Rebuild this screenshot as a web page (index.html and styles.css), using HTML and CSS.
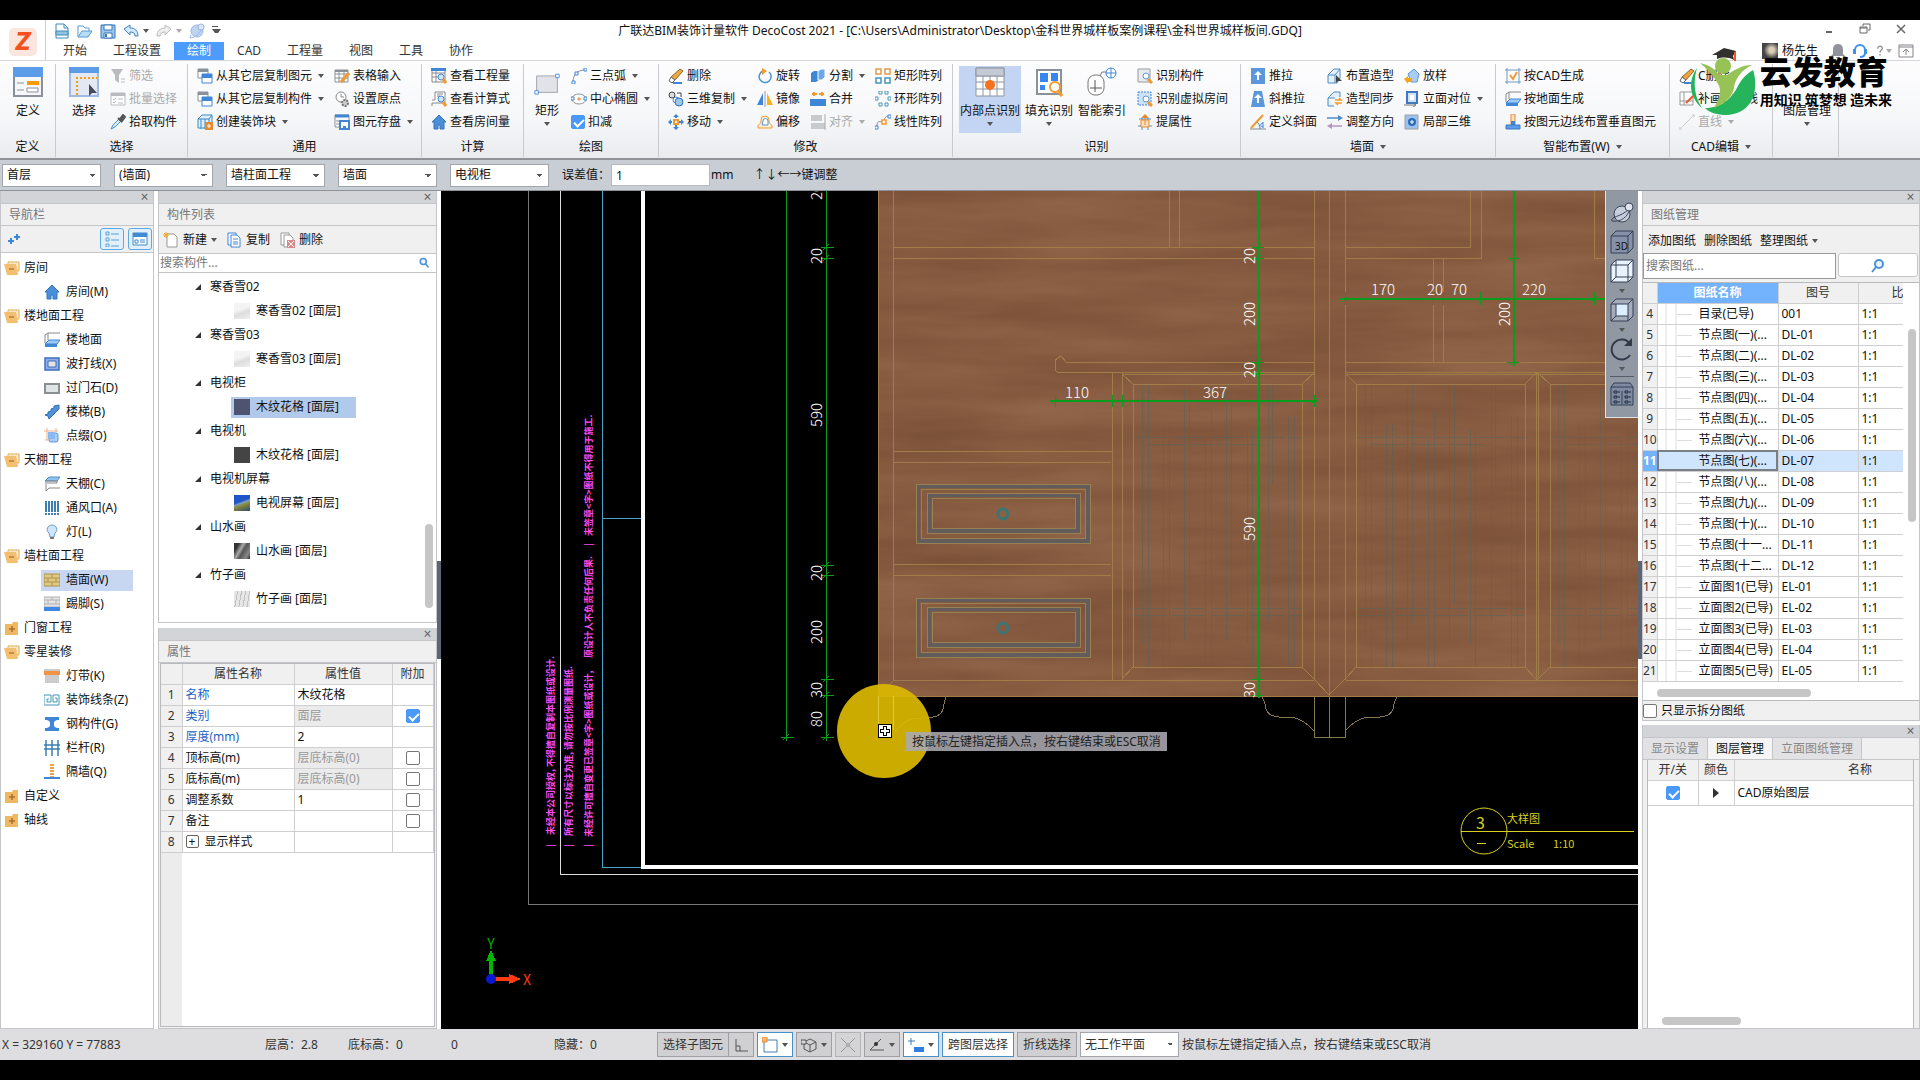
FILE: index.html
```html
<!DOCTYPE html>
<html lang="zh-CN">
<head>
  <meta charset="UTF-8">
  <meta name="viewport" content="width=device-width, initial-scale=1.0">
  <title>广联达BIM装饰计量软件 DecoCost 2021</title>
  <link rel="stylesheet" href="styles.css">
</head>
<body>
  <!-- icon sprite -->
  <svg class="sprite" aria-hidden="true">
    <symbol id="i-new" viewBox="0 0 16 16"><path d="M2 1h8l4 4v10H2z" fill="#fff" stroke="#3f8ab8"/><path d="M10 1v4h4" fill="none" stroke="#3f8ab8"/><path d="M2 8h12v4H2z" fill="#8fc3e6" stroke="#3f8ab8"/></symbol>
    <symbol id="i-open" viewBox="0 0 16 16"><path d="M1 14V3h5l2 2h4v3" fill="#fff" stroke="#5a9bd0"/><path d="M1 14l4-6h10l-4 6z" fill="#b9dcf5" stroke="#5a9bd0"/></symbol>
    <symbol id="i-save" viewBox="0 0 16 16"><path d="M1 2h14v13H1z" fill="#9cc7ec" stroke="#3479b8"/><path d="M4 2h8v5H4zM4 10h8v5H4z" fill="#fff" stroke="#3479b8"/><path d="M6 11v3" stroke="#3479b8" stroke-width="2"/></symbol>
    <symbol id="i-undo" viewBox="0 0 16 16"><path d="M1 6l6-4v3c5 0 8 3 8 8h-3c0-3-2-4-5-4v3z" fill="#d5eafa" stroke="#3a83bf"/></symbol>
    <symbol id="i-redo" viewBox="0 0 16 16"><path d="M15 6L9 2v3C4 5 1 8 1 13h3c0-3 2-4 5-4v3z" fill="#eee" stroke="#bbb"/></symbol>
    <symbol id="i-planet" viewBox="0 0 16 16"><circle cx="8" cy="8" r="6" fill="#bfd3f3" stroke="#9ab6e4"/><circle cx="12" cy="4" r="3" fill="#dce8fa" stroke="#9ab6e4"/><path d="M2 12l-1 3c4 0 9-4 11-8" fill="none" stroke="#9ab6e4"/></symbol>
    <symbol id="i-define" viewBox="0 0 30 30"><path d="M1 1h28v28H1z" fill="#f5f7fb" stroke="#8b919b" stroke-width="2"/><path d="M0 0h30v10H0z" fill="#5b9be8"/><path d="M14 14h12v4H14z" fill="#f90"/><path d="M4 16h7M4 23h7" stroke="#8b919b"/><path d="M14 21h11v4H14z" fill="#fff" stroke="#8b919b"/></symbol>
    <symbol id="i-select" viewBox="0 0 30 30"><path d="M1 1h28v28H1z" fill="#e3e8f3" stroke="#9dbbe4" stroke-width="2"/><path d="M0 0h30v6H0z" fill="#5b9be8"/><path d="M8 28V11h20" fill="none" stroke="#f90" stroke-width="2" stroke-dasharray="2 2"/><path d="M20 17v12l3-3h5z" fill="#454a5c"/></symbol>
    <symbol id="i-filter" viewBox="0 0 16 16"><path d="M1 1h12L9 7v8l-4-3V7z" fill="#b9bbbe"/><path d="M11 11h4M11 14h4" stroke="#b9bbbe"/></symbol>
    <symbol id="i-batch" viewBox="0 0 16 16"><path d="M1 2h14v12H1z" fill="#fff" stroke="#b9bbbe"/><path d="M1 2h14v3H1z" fill="#b9bbbe"/><path d="M3 8l1 1 2-2M3 11l1 1 2-2M8 8h5M8 12h5" fill="none" stroke="#b9bbbe"/></symbol>
    <symbol id="i-pick" viewBox="0 0 16 16"><path d="M1 15l2-4 6-6 2 2-6 6z" fill="#d9ecfa" stroke="#4d8ec4"/><path d="M8 4l4 4M10 5l3-4 2 2-3 4z" fill="#555" stroke="#555" stroke-width="2"/></symbol>
    <symbol id="i-copylayer" viewBox="0 0 16 16"><path d="M1 1h10v9H1z" fill="#fff" stroke="#8b919b"/><path d="M1 1h10v3H1z" fill="#8b919b"/><path d="M5 6h10v9H5z" fill="#fff" stroke="#3f86d6"/><path d="M5 6h10v4H5z" fill="#3f86d6"/></symbol>
    <symbol id="i-block" viewBox="0 0 16 16"><path d="M1 5l4-4h10v10l-3 3H1z" fill="#e0effb" stroke="#3b8ac0"/><path d="M1 5h11v9M4 5v10M8 5v10M12 5l3-4" fill="none" stroke="#3b8ac0"/><path d="M8 8h8v8H8z" fill="#e8892e"/><path d="M12 10v4M10 12h4" stroke="#fff"/></symbol>
    <symbol id="i-table" viewBox="0 0 16 16"><path d="M1 2h13v12H1zM1 6h13M1 10h13M5 2v12M10 2v12" fill="#fff" stroke="#8b919b"/><path d="M1 2h13v2H1z" fill="#8b919b"/><path d="M7 14l8-9" stroke="#f29a2e" stroke-width="3"/></symbol>
    <symbol id="i-origin" viewBox="0 0 16 16"><circle cx="7" cy="6" r="5" fill="#fff" stroke="#888"/><path d="M7 3v3h3" fill="none" stroke="#888"/><circle cx="11" cy="12" r="3" fill="#ccc" stroke="#777" stroke-dasharray="2 1" stroke-width="2"/></symbol>
    <symbol id="i-disk" viewBox="0 0 16 16"><path d="M1 1h14v5M1 1v12h4" fill="#fff" stroke="#8b919b"/><path d="M1 2h14" stroke="#3f86d6" stroke-width="3"/><path d="M6 7h9v8H6z" fill="#fff" stroke="#3f86d6" stroke-width="2"/><path d="M9 12h3v3H9z" fill="#3f86d6"/><path d="M2 7h3M2 10h3" stroke="#8b919b"/></symbol>
    <symbol id="i-lookup" viewBox="0 0 16 16"><path d="M1 1h13v13H1zM1 5h13M1 9h6M5 1v13" fill="#fff" stroke="#888"/><path d="M0 0h15v3H0z" fill="#3f86d6"/><circle cx="10" cy="9" r="3" fill="#cfe6fa" stroke="#3f86d6"/><path d="M12 11l3 4" stroke="#f29a2e" stroke-width="3"/></symbol>
    <symbol id="i-formula" viewBox="0 0 16 16"><path d="M4 1h10v11H1v3M1 9h3V1" fill="#fff" stroke="#888"/><path d="M6 3h6M6 5h3" stroke="#888"/><circle cx="10" cy="8" r="3" fill="#cfe6fa" stroke="#3f86d6"/><path d="M12 11l3 4" stroke="#f29a2e" stroke-width="3"/></symbol>
    <symbol id="i-home" viewBox="0 0 16 16"><path d="M8 1l7 7h-2v7h-4v-4H7v4H3V8H1z" fill="#4a90d9" stroke="#3475bd"/></symbol>
    <symbol id="i-rect" viewBox="0 0 30 30"><path d="M3 8h24v19H3z" fill="#e2e3e8" stroke="#9a9da5"/><path d="M1 25h4v4H1zM25 6h4v4h-4z" fill="#fff" stroke="#3f86d6"/></symbol>
    <symbol id="i-arc" viewBox="0 0 16 16"><path d="M2 14C2 7 6 2 14 2" fill="none" stroke="#8b919b"/><path d="M1 13h3v3H1zM4 4h3v3H4zM13 0h3v3h-3z" fill="#fff" stroke="#3f86d6"/></symbol>
    <symbol id="i-ellipse" viewBox="0 0 16 16"><ellipse cx="8" cy="8" rx="7" ry="5" fill="#fff" stroke="#8b919b"/><path d="M8 6v4M6 8h4" stroke="#e8892e"/><path d="M0 6h3v3H0zM13 6h3v3h-3z" fill="#fff" stroke="#3f86d6"/></symbol>
    <symbol id="i-erase" viewBox="0 0 16 16"><path d="M12 1l3 2-8 9-4-3z" fill="#f0a63a" stroke="#8a6a3a"/><path d="M3 9l4 3-3 3-3-2z" fill="#fff" stroke="#666"/><path d="M5 15h9" stroke="#3f86d6" stroke-width="2"/></symbol>
    <symbol id="i-copy3d" viewBox="0 0 16 16"><circle cx="4" cy="4" r="3" fill="#ddd" stroke="#444"/><circle cx="8" cy="9" r="3" fill="#fff" stroke="#3f86d6"/><circle cx="11" cy="11" r="4" fill="#9cc7ec" stroke="#2d72ba"/><path d="M9 2h4v4" fill="none" stroke="#444"/></symbol>
    <symbol id="i-move" viewBox="0 0 16 16"><path d="M8 0l3 3H5zM8 16l3-3H5zM0 8l3-3v6zM16 8l-3-3v6z" fill="#3f86d6"/><path d="M8 2v12M2 8h12" stroke="#3f86d6" stroke-width="2" stroke-dasharray="2 1"/><path d="M6 6h4v4H6z" fill="#fff" stroke="#f29a2e" stroke-width="2"/></symbol>
    <symbol id="i-rotate" viewBox="0 0 16 16"><path d="M6 3a6 6 0 1 0 6 1" fill="none" stroke="#4f93d6" stroke-width="1.5"/><path d="M5 0l5 3-5 4z" fill="#f29a2e"/></symbol>
    <symbol id="i-mirror" viewBox="0 0 16 16"><path d="M6 2v12H0z" fill="#3f86d6"/><path d="M10 2v12h6z" fill="#f6b21b"/><path d="M8 0v16" stroke="#999"/></symbol>
    <symbol id="i-offset" viewBox="0 0 16 16"><path d="M1 14h14v-2c0-2-3-2-3-4V6a4 4 0 0 0-8 0v2c0 2-3 2-3 4z" fill="#fff1d6" stroke="#f29a2e"/><path d="M5 11h6V7a2 2 0 0 0-5 0z" fill="#fff" stroke="#4f93d6"/></symbol>
    <symbol id="i-split" viewBox="0 0 16 16"><path d="M1 5l3-2h5v9l-3 2H1z" fill="#3f86d6"/><path d="M8 3l3-2h4v8l-3 3H8z" fill="#6ba7ea" stroke="#fff"/></symbol>
    <symbol id="i-merge" viewBox="0 0 16 16"><path d="M0 8h16v7H0z" fill="#3f86d6"/><path d="M2 3h5M9 3h5M4 1v4M12 1v4" stroke="#f29a2e" stroke-width="2"/></symbol>
    <symbol id="i-align" viewBox="0 0 16 16"><path d="M1 1h11v6H1zM1 9h14v6H1z" fill="#c9cacc"/><path d="M15 0v16" stroke="#aaa"/></symbol>
    <symbol id="i-gridarr" viewBox="0 0 16 16"><path d="M1 1h5v5H1zM10 1h5v5h-5z" fill="#fff" stroke="#e09a4e" stroke-width="1.5"/><path d="M1 10h5v5H1zM10 10h5v5h-5z" fill="#fff" stroke="#4596b8" stroke-width="1.5"/></symbol>
    <symbol id="i-ringarr" viewBox="0 0 16 16"><path d="M4 0h3v3H4zM10 0h3v3h-3zM0 6h3v3H0zM13 6h3v3h-3zM4 12h3v3H4zM10 12h3v3h-3z" fill="#fff" stroke="#4596b8"/></symbol>
    <symbol id="i-linearr" viewBox="0 0 16 16"><path d="M2 12c0-7 4-3 6-5s2-5 6-5" fill="none" stroke="#888"/><path d="M0 12h3v3H0zM13 1h3v3h-3z" fill="#fff" stroke="#3f86d6"/><path d="M7 6h4v4H7z" fill="#fff" stroke="#f29a2e" stroke-width="1.5"/></symbol>
    <symbol id="i-point" viewBox="0 0 30 30"><path d="M1 1h28v28H1zM1 9h28M1 15h28M1 22h28M8 9v20M15 9v20M22 9v20" fill="#fff" stroke="#8d94a0"/><path d="M1 1h28v8H1z" fill="#c3cad6" stroke="#8d94a0"/><circle cx="15" cy="18" r="5" fill="#f4731c"/></symbol>
    <symbol id="i-fill" viewBox="0 0 30 30"><path d="M3 3h24v24H3z" fill="#fff" stroke="#8b919b" stroke-width="2"/><path d="M6 6h8v9H6zM17 6h7v8h-7zM6 18h5v5H6z" fill="#3a86ef"/><circle cx="21" cy="20" r="5" fill="#fff" stroke="#f29a2e" stroke-width="2"/><path d="M24 24l4 5" stroke="#f29a2e" stroke-width="3"/></symbol>
    <symbol id="i-index" viewBox="0 0 30 30"><rect x="1" y="8" width="16" height="20" rx="7" fill="#fff" stroke="#777"/><path d="M3 21h12M8 13v12" stroke="#555"/><circle cx="24" cy="6" r="5" fill="#fff" stroke="#3f86d6"/><path d="M19 6h10M24 1v10" stroke="#3f86d6"/><path d="M13 9l2-4h4" fill="none" stroke="#777"/></symbol>
    <symbol id="i-recog" viewBox="0 0 16 16"><path d="M1 1h12v13H1z" fill="#e7eaf0" stroke="#999"/><circle cx="9" cy="8" r="3" fill="#fff" stroke="#6795cf"/><path d="M11 11l4 4" stroke="#f29a2e" stroke-width="3"/></symbol>
    <symbol id="i-recogroom" viewBox="0 0 16 16"><path d="M1 1h13v13H1z" fill="#cfe3f8" stroke="#3f86d6" stroke-dasharray="2 1"/><circle cx="9" cy="8" r="3" fill="#fff" stroke="#6795cf"/><path d="M11 11l4 4" stroke="#f29a2e" stroke-width="3"/></symbol>
    <symbol id="i-attr" viewBox="0 0 16 16"><path d="M2 5h12M1 12h14M5 4v12M11 4v12" stroke="#4f93d6"/><path d="M4 6h8v7H4z" fill="#fbe0c0" stroke="#e8892e"/><path d="M8 0l4 4H4z" fill="#e8892e"/><path d="M8 3v8" stroke="#e8892e"/></symbol>
    <symbol id="i-push" viewBox="0 0 16 16"><path d="M1 0h14v16H1z" fill="#5b97dd"/><path d="M8 3l4 4H9v5H7V7H4z" fill="#fff"/></symbol>
    <symbol id="i-slope" viewBox="0 0 16 16"><path d="M4 0h8l3 16H1z" fill="#5b97dd"/><path d="M8 3l4 4H9v5H7V7H4z" fill="#fff"/></symbol>
    <symbol id="i-angle" viewBox="0 0 16 16"><path d="M0 15h16" stroke="#888"/><path d="M1 14L13 1" stroke="#f29a2e" stroke-width="2"/><path d="M7 8c2 1 3 4 3 7M13 9c-3 0-3 4 0 4M13 8v6" fill="none" stroke="#3f86d6"/></symbol>
    <symbol id="i-shape" viewBox="0 0 16 16"><path d="M1 7l6-6h6v9l-3 5H1z" fill="#e3f0fb" stroke="#4f8cc4"/><path d="M1 7h7v8M8 7l5-6" fill="none" stroke="#4f8cc4"/><path d="M9 7v8l2-2h4z" fill="#444"/></symbol>
    <symbol id="i-sync" viewBox="0 0 16 16"><path d="M1 7l6-6h6v5M1 7v8h6M1 7h7" fill="#e3f0fb" stroke="#4f8cc4"/><path d="M8 9h6l-2-2M15 12H9l2 2" fill="none" stroke="#f29a2e" stroke-width="1.5"/></symbol>
    <symbol id="i-direction" viewBox="0 0 16 16"><path d="M0 4h12" stroke="#4f8cc4" stroke-width="1.5"/><path d="M11 1l5 3-5 3z" fill="#4f8cc4"/><path d="M4 12h11" stroke="#b396c4" stroke-width="1.5"/><path d="M5 9l-5 3 5 3z" fill="#b396c4"/></symbol>
    <symbol id="i-loft" viewBox="0 0 16 16"><path d="M4 6l6-5 5 5-2 8H7z" fill="#a9cdf2" stroke="#5b97dd"/><path d="M0 11l4-3v2h4v4H4v2z" fill="#f6a51b"/></symbol>
    <symbol id="i-align3" viewBox="0 0 16 16"><path d="M3 1h10v11H3z" fill="#cfe3f8" stroke="#3f78c0" stroke-width="2"/><path d="M6 4h4v5H6z" fill="#fff"/><path d="M0 14h11M9 12l3 2-3 2" fill="none" stroke="#777"/></symbol>
    <symbol id="i-local3d" viewBox="0 0 16 16"><path d="M1 1h13v14H1z" fill="#9fc2ec" stroke="#9aa0a8"/><circle cx="8" cy="8" r="4" fill="#2d6cb8"/><path d="M8 6v4M6 8h4" stroke="#fff"/></symbol>
    <symbol id="i-bycad" viewBox="0 0 16 16"><path d="M2 0v16M14 0v16M0 2h16M0 14h16" stroke="#6f9bc4"/><path d="M5 7l3 4 4-7" fill="none" stroke="#f29a2e" stroke-width="2"/></symbol>
    <symbol id="i-floor" viewBox="0 0 16 16"><path d="M4 8V1h12M4 1L1 3v8" fill="none" stroke="#888"/><path d="M1 12l4-4h11l-3 4z" fill="#9ccaf2" stroke="#3f86d6"/><path d="M1 12h12v3H1z" fill="#3f86d6"/></symbol>
    <symbol id="i-edge" viewBox="0 0 16 16"><path d="M6 0h4v11H6z" fill="#fbe0c0" stroke="#e8892e"/><path d="M6 7h4v4H6z" fill="#3f86d6"/><path d="M1 11h14v4H1z" fill="#5b9be8" stroke="#3f78c0"/></symbol>
    <symbol id="i-patch" viewBox="0 0 16 16"><path d="M1 1h13v13H1zM5 1v13M1 10h13" fill="#fff" stroke="#999"/><path d="M7 12l7-7" stroke="#e8592e" stroke-width="2"/></symbol>
    <symbol id="i-line" viewBox="0 0 16 16"><path d="M2 14L14 2" stroke="#ccc"/><path d="M0 13h3v3H0zM13 0h3v3h-3z" fill="#ddd"/></symbol>
    <symbol id="i-folder" viewBox="0 0 16 16"><path d="M4 2h11v9H4z" fill="#fbe9c8" stroke="#e2ab55"/><path d="M0 4h12l2 11H3z" fill="#f3bf71"/><path d="M5 9h5" stroke="#b9783a" stroke-width="1.5"/></symbol>
    <symbol id="i-folder-plus" viewBox="0 0 16 16"><path d="M1 4h7l1-2h5v13H1z" fill="#f0b863"/><path d="M5 9h6M8 6v6" stroke="#a96f2a" stroke-width="1.5"/></symbol>
    <symbol id="i-ceiling" viewBox="0 0 16 16"><path d="M1 5l4-4h11l-3 4z" fill="#8ec2ef" stroke="#4f8cc4"/><path d="M1 5h12v2H1M2 8v7l3-3h11" fill="none" stroke="#888"/></symbol>
    <symbol id="i-wave" viewBox="0 0 16 16"><path d="M1 2h14v12H1z" fill="#8fb0e4" stroke="#3f6fc0" stroke-width="1.5"/><path d="M4 5h8v6H4z" fill="#e4e4e4" stroke="#3f6fc0"/></symbol>
    <symbol id="i-stone" viewBox="0 0 16 16"><path d="M1 4h14v9H1z" fill="#e0e4e6" stroke="#8a9092" stroke-width="2"/></symbol>
    <symbol id="i-stairs" viewBox="0 0 16 16"><path d="M1 11l3-1V8l3-1V5l3-1V2l5-1v4L5 15l-1-3z" fill="#4f93d6" stroke="#2f70b5"/></symbol>
    <symbol id="i-dot" viewBox="0 0 16 16"><rect x="5" y="5" width="9" height="9" rx="2" fill="#a9cdf5" stroke="#5b97dd"/><path d="M3 0v12M0 3h14M12 0v4M1 12h4" stroke="#f0b08a"/><path d="M4 4h7v7H4z" fill="#8ab8f0"/></symbol>
    <symbol id="i-vent" viewBox="0 0 16 16"><path d="M2 1v11M5 1v11M8 1v11M11 1v11M14 1v11M2 13v2M5 13v2M8 13v2M11 13v2M14 13v2" stroke="#3e7fb0" stroke-width="2"/></symbol>
    <symbol id="i-bulb" viewBox="0 0 16 16"><path d="M5 9C1 6 4 1 8 1s7 5 3 8l-1 4H6z" fill="#cfe5fa" stroke="#6b9bc8"/><path d="M6 14h4" stroke="#777" stroke-width="2"/></symbol>
    <symbol id="i-wall" viewBox="0 0 16 16"><path d="M0 2h16v12H0zM0 6h16M0 10h16M8 2v4M4 6v4M12 6v4M8 10v4" fill="#dcc98a" stroke="#b3923f"/></symbol>
    <symbol id="i-skirting" viewBox="0 0 16 16"><path d="M0 1h16v10H0zM0 4h16M0 8h16M8 1v3M4 4v4M12 4v4" fill="#e5e5e5" stroke="#b0b0b0"/><path d="M0 11h16v4H0z" fill="#3f86e6"/></symbol>
    <symbol id="i-strip" viewBox="0 0 16 16"><path d="M0 1h16v3H0zM1 7h14v8H1z" fill="#ccc"/><path d="M0 3h16v4H0z" fill="#f29444"/></symbol>
    <symbol id="i-meander" viewBox="0 0 16 16"><path d="M0 3h7v7H3V7h2M0 13h15V3H9v7h4V6h-2M0 3v9" fill="none" stroke="#4596b8"/></symbol>
    <symbol id="i-steel" viewBox="0 0 16 16"><path d="M1 1h14v3h-2c-3 1-3 2-3 4s0 3 3 4h2v3H1v-3h2c3-1 3-2 3-4s0-3-3-4H1z" fill="#3f86d6"/></symbol>
    <symbol id="i-rail" viewBox="0 0 16 16"><path d="M0 5h16M0 9h16M2 0v16M8 0v16M14 0v16" stroke="#3e7fb0" stroke-width="1.5"/></symbol>
    <symbol id="i-partition" viewBox="0 0 16 16"><path d="M8 0v13" stroke="#f0a04e" stroke-width="4" stroke-dasharray="2 1"/><path d="M0 14h16" stroke="#3f86d6" stroke-width="2"/></symbol>
    <symbol id="i-plus2" viewBox="0 0 16 16"><path d="M2 10h6M5 7v6M8 6h6M11 3v6" stroke="#3f86d6" stroke-width="2"/></symbol>
    <symbol id="i-list" viewBox="0 0 16 16"><path d="M2 1h3v3H2zM2 7h3v3H2zM2 13h3v3H2zM7 3h8M7 9h8M7 15h8" fill="none" stroke="#5a9ed6"/></symbol>
    <symbol id="i-window" viewBox="0 0 16 16"><path d="M1 2h14v12H1z" fill="#fff" stroke="#3f8ad0"/><path d="M1 2h14v4H1z" fill="#3f8ad0"/><path d="M8 9h5M8 11h5M3 9h3v3H3z" stroke="#3f8ad0" fill="none"/></symbol>
    <symbol id="i-add" viewBox="0 0 16 16"><path d="M4 2h7l3 3v10H4z" fill="#fff" stroke="#999"/><path d="M3 0v6M0 3h6M1 1l4 4M5 1L1 5" stroke="#f5a623"/></symbol>
    <symbol id="i-copy" viewBox="0 0 16 16"><path d="M2 1h8v12H2z" fill="#fff" stroke="#3f86d6"/><path d="M5 3h6l3 3v9H5zM7 7h5M7 10h5M7 12h5" fill="#fff" stroke="#3f86d6"/></symbol>
    <symbol id="i-delete" viewBox="0 0 16 16"><path d="M2 1h8v12H2z" fill="#fff" stroke="#999"/><path d="M5 3h6l3 3v9H5z" fill="#fff" stroke="#999"/><path d="M8 8h8v8H8z" fill="#d98888"/><path d="M9 9l6 6M15 9l-6 6" stroke="#fff"/></symbol>
    <symbol id="i-search" viewBox="0 0 16 16"><circle cx="7" cy="6" r="4" fill="#eaf4fd" stroke="#4a90d9" stroke-width="2"/><path d="M10 9l4 5" stroke="#4a90d9" stroke-width="2"/></symbol>
    <symbol id="i-bell" viewBox="0 0 16 16"><path d="M8 1c4 0 5 3 5 6v4l2 2H1l2-2V7c0-3 1-6 5-6zM6 14h4v1H6z" fill="#909399"/></symbol>
    <symbol id="i-headset" viewBox="0 0 16 16"><path d="M3 9V7a5 5 0 0 1 10 0v3c0 3-2 4-5 4" fill="none" stroke="#3d92ee" stroke-width="2"/><path d="M1 6h3v5H1zM12 6h3v5h-3z" fill="#3d92ee"/></symbol>
    <symbol id="i-pin" viewBox="0 0 16 16"><path d="M1 2h14v12H1zM1 4h14M8 12V7M5 9l3-3 3 3" fill="none" stroke="#808388"/></symbol>
    <symbol id="i-help" viewBox="0 0 16 16"><path d="M5 5c0-5 7-4 6 0-1 2-3 2-3 5M8 12v2" fill="none" stroke="#999" stroke-width="2"/></symbol>
    <symbol id="i-min" viewBox="0 0 16 16"><path d="M5 11h6" stroke="#666" stroke-width="2"/></symbol>
    <symbol id="i-restore" viewBox="0 0 16 16"><path d="M6 5V3h7v6h-2M3 6h7v6H3zM3 7h7" fill="none" stroke="#666"/></symbol>
    <symbol id="i-close" viewBox="0 0 16 16"><path d="M4 4l8 8M12 4l-8 8" stroke="#666" stroke-width="1.5"/></symbol>
    <symbol id="i-orbit" viewBox="0 0 24 24"><circle cx="12" cy="13" r="8" fill="#c6cede" stroke="#3c4658"/><path d="M2 20c-2-5 8-3 17-12M2 20c5 1 14-1 17-10" fill="none" stroke="#3c4658"/><circle cx="19" cy="6" r="4" fill="#dfe4ee" stroke="#3c4658"/></symbol>
    <symbol id="i-cube3d" viewBox="0 0 24 24"><path d="M1 6l5-5h17v17l-5 5H1zM1 6h17v17M18 6l5-5" fill="#8591a8" stroke="#353f55"/></symbol>
    <symbol id="i-cube-a" viewBox="0 0 24 24"><path d="M1 6l5-5h17v17l-5 5H1z" fill="#e8f3ff" stroke="#353f55"/><path d="M1 6h17v17M18 6l5-5M6 1v17h17M1 23l5-5" fill="none" stroke="#353f55"/></symbol>
    <symbol id="i-cube-b" viewBox="0 0 24 24"><path d="M1 6l5-5h17v17l-5 5H1z" fill="#a5adbb" stroke="#353f55"/><path d="M6 6h12v12H6z" fill="#dceeff"/><path d="M1 6h17v17M18 6l5-5M6 6v12h12M1 23l5-5" fill="none" stroke="#353f55"/></symbol>
    <symbol id="i-turn" viewBox="0 0 24 24"><path d="M20 18A10 10 0 1 1 20 7" fill="none" stroke="#333b4a" stroke-width="2"/><path d="M22 1v8h-8z" fill="#333b4a"/></symbol>
    <symbol id="i-checks" viewBox="0 0 24 24"><path d="M1 5l3-4h16l3 4v18H1zM1 5h22M12 9v13" fill="#7e8ba3" stroke="#353f55"/><path d="M4 9h3v2H4zM4 14h3v2H4zM4 19h3v2H4zM15 9h3v2h-3zM15 14h3v2h-3zM15 19h3v2h-3zM8 10h2M8 15h2M8 20h2M19 10h2M19 15h2M19 20h2" fill="none" stroke="#222b3b"/></symbol>
    <symbol id="i-ortho" viewBox="0 0 16 16"><path d="M3 2v12h12M3 9h4v5" fill="none" stroke="#555"/></symbol>
    <symbol id="i-snap" viewBox="0 0 16 16"><path d="M2 3h13v12H2z" fill="#fff" stroke="#3f7fb5"/><path d="M0 0h5v5H0z" fill="#f9b877" stroke="#e8892e"/></symbol>
    <symbol id="i-box" viewBox="0 0 16 16"><path d="M3 5l6-3 6 3v7l-6 3-6-3zM9 8v7M3 5l6 3 6-3" fill="none" stroke="#555"/><path d="M0 3h5v4H0z" fill="#d8d8da" stroke="#555"/></symbol>
    <symbol id="i-cross" viewBox="0 0 16 16"><path d="M1 1l14 14M15 1L1 15" stroke="#777"/><path d="M6 6h4v4H6z" fill="#999"/></symbol>
    <symbol id="i-track" viewBox="0 0 16 16"><path d="M1 13h14M1 13L12 2" fill="none" stroke="#555"/><circle cx="7" cy="7" r="2" fill="#333"/></symbol>
    <symbol id="i-dyn" viewBox="0 0 16 16"><path d="M3 1v7M0 4h7" stroke="#3f7fb5"/><path d="M6 10h10v5H6z" fill="#2f7fe0"/></symbol>
  </svg>

  <header class="titlebar">
    <div class="app-logo"><span>Z</span></div>
    <div class="title-main">
      <div class="quick">
        <button aria-label="新建"><svg><use href="#i-new"/></svg></button>
        <button aria-label="打开"><svg><use href="#i-open"/></svg></button>
        <button aria-label="保存"><svg><use href="#i-save"/></svg></button>
        <button aria-label="撤销"><svg><use href="#i-undo"/></svg><i class="caret"></i></button>
        <button aria-label="恢复"><svg><use href="#i-redo"/></svg><i class="caret pale"></i></button>
        <button aria-label="视图"><svg><use href="#i-planet"/></svg></button>
        <button aria-label="自定义快速访问"><i class="caret barred"></i></button>
      </div>
      <nav class="tabs">
        <a href="#">开始</a><a href="#">工程设置</a><a href="#" class="active">绘制</a><a href="#">CAD</a><a href="#">工程量</a><a href="#">视图</a><a href="#">工具</a><a href="#">协作</a>
      </nav>
    </div>
    <h1>广联达BIM装饰计量软件 DecoCost 2021 - [C:\Users\Administrator\Desktop\金科世界城样板案例课程\金科世界城样板间.GDQ]</h1>
    <div class="title-right">
      <div class="win-btns">
        <button aria-label="最小化"><svg><use href="#i-min"/></svg></button>
        <button aria-label="还原"><svg><use href="#i-restore"/></svg></button>
        <button aria-label="关闭"><svg><use href="#i-close"/></svg></button>
      </div>
      <div class="user">
        <span class="avatar"></span><span class="user-name">杨先生</span>
        <svg><use href="#i-bell"/></svg>
        <svg><use href="#i-headset"/></svg>
        <span class="help"><svg><use href="#i-help"/></svg><i class="caret pale"></i></span>
        <svg><use href="#i-pin"/></svg>
      </div>
    </div>
    <div class="watermark">
      <svg class="wm-logo" viewBox="0 0 68 68">
        <path d="M9 20C-1 34 2 50 14 60 6 48 5 34 9 20z" fill="#25b35c"/>
        <path d="M17 60C34 60 44 50 50 38 54 30 59 26 65 22 71 40 66 66 38 67 30 67 22 65 17 60z" fill="#25b35c"/>
        <path d="M12 15C22 17 28 22 31 27H39C46 22 54 17 64 17 54 22 47 30 46 40 44 50 36 56 26 60 32 50 34 42 30 36 26 28 20 22 12 15z" fill="#97c255"/>
        <circle cx="35" cy="18" r="8" fill="#97c255"/>
        <path d="M24 7l12-7 12 3-3 5 1 4c-6-3-11-3-17-1v-4z" fill="#33312f"/>
        <path d="M47 4v9" stroke="#e8592e" stroke-width="2"/>
      </svg>
      <div class="wm-text"><strong>云发教育</strong><em>用知识 筑梦想 造未来</em></div>
    </div>
  </header>

  <section class="ribbon">
    <div class="group g-define">
      <div class="group-body"><button class="big"><svg><use href="#i-define"/></svg>定义</button></div>
      <div class="group-label">定义</div>
    </div>
    <div class="group g-select">
      <div class="group-body">
        <button class="big"><svg><use href="#i-select"/></svg>选择</button>
        <div class="col">
          <button class="cmd" disabled><svg><use href="#i-filter"/></svg>筛选</button>
          <button class="cmd" disabled><svg><use href="#i-batch"/></svg>批量选择</button>
          <button class="cmd"><svg><use href="#i-pick"/></svg>拾取构件</button>
        </div>
      </div>
      <div class="group-label">选择</div>
    </div>
    <div class="group g-common">
      <div class="group-body">
        <div class="col">
          <button class="cmd"><svg><use href="#i-copylayer"/></svg>从其它层复制图元<i class="caret"></i></button>
          <button class="cmd"><svg><use href="#i-copylayer"/></svg>从其它层复制构件<i class="caret"></i></button>
          <button class="cmd"><svg><use href="#i-block"/></svg>创建装饰块<i class="caret"></i></button>
        </div>
        <div class="col">
          <button class="cmd"><svg><use href="#i-table"/></svg>表格输入</button>
          <button class="cmd"><svg><use href="#i-origin"/></svg>设置原点</button>
          <button class="cmd"><svg><use href="#i-disk"/></svg>图元存盘<i class="caret"></i></button>
        </div>
      </div>
      <div class="group-label">通用</div>
    </div>
    <div class="group g-calc">
      <div class="group-body">
        <div class="col">
          <button class="cmd"><svg><use href="#i-lookup"/></svg>查看工程量</button>
          <button class="cmd"><svg><use href="#i-formula"/></svg>查看计算式</button>
          <button class="cmd"><svg><use href="#i-home"/></svg>查看房间量</button>
        </div>
      </div>
      <div class="group-label">计算</div>
    </div>
    <div class="group g-draw">
      <div class="group-body">
        <button class="big"><svg><use href="#i-rect"/></svg>矩形<i class="caret"></i></button>
        <div class="col">
          <button class="cmd"><svg><use href="#i-arc"/></svg>三点弧<i class="caret"></i></button>
          <button class="cmd"><svg><use href="#i-ellipse"/></svg>中心椭圆<i class="caret"></i></button>
          <label class="cmd"><input type="checkbox" checked>扣减</label>
        </div>
      </div>
      <div class="group-label">绘图</div>
    </div>
    <div class="group g-modify">
      <div class="group-body">
        <div class="col">
          <button class="cmd"><svg><use href="#i-erase"/></svg>删除</button>
          <button class="cmd"><svg><use href="#i-copy3d"/></svg>三维复制<i class="caret"></i></button>
          <button class="cmd"><svg><use href="#i-move"/></svg>移动<i class="caret"></i></button>
        </div>
        <div class="col">
          <button class="cmd"><svg><use href="#i-rotate"/></svg>旋转</button>
          <button class="cmd"><svg><use href="#i-mirror"/></svg>镜像</button>
          <button class="cmd"><svg><use href="#i-offset"/></svg>偏移</button>
        </div>
        <div class="col">
          <button class="cmd"><svg><use href="#i-split"/></svg>分割<i class="caret"></i></button>
          <button class="cmd"><svg><use href="#i-merge"/></svg>合并</button>
          <button class="cmd" disabled><svg><use href="#i-align"/></svg>对齐<i class="caret pale"></i></button>
        </div>
        <div class="col">
          <button class="cmd"><svg><use href="#i-gridarr"/></svg>矩形阵列</button>
          <button class="cmd"><svg><use href="#i-ringarr"/></svg>环形阵列</button>
          <button class="cmd"><svg><use href="#i-linearr"/></svg>线性阵列</button>
        </div>
      </div>
      <div class="group-label">修改</div>
    </div>
    <div class="group g-recog">
      <div class="group-body">
        <div class="bigs">
          <button class="big on"><svg><use href="#i-point"/></svg>内部点识别<i class="caret"></i></button>
          <button class="big"><svg><use href="#i-fill"/></svg>填充识别<i class="caret"></i></button>
          <button class="big"><svg><use href="#i-index"/></svg>智能索引</button>
        </div>
        <div class="col">
          <button class="cmd"><svg><use href="#i-recog"/></svg>识别构件</button>
          <button class="cmd"><svg><use href="#i-recogroom"/></svg>识别虚拟房间</button>
          <button class="cmd"><svg><use href="#i-attr"/></svg>提属性</button>
        </div>
      </div>
      <div class="group-label">识别</div>
    </div>
    <div class="group g-wall">
      <div class="group-body">
        <div class="col">
          <button class="cmd"><svg><use href="#i-push"/></svg>推拉</button>
          <button class="cmd"><svg><use href="#i-slope"/></svg>斜推拉</button>
          <button class="cmd"><svg><use href="#i-angle"/></svg>定义斜面</button>
        </div>
        <div class="col">
          <button class="cmd"><svg><use href="#i-shape"/></svg>布置造型</button>
          <button class="cmd"><svg><use href="#i-sync"/></svg>造型同步</button>
          <button class="cmd"><svg><use href="#i-direction"/></svg>调整方向</button>
        </div>
        <div class="col">
          <button class="cmd"><svg><use href="#i-loft"/></svg>放样</button>
          <button class="cmd"><svg><use href="#i-align3"/></svg>立面对位<i class="caret"></i></button>
          <button class="cmd"><svg><use href="#i-local3d"/></svg>局部三维</button>
        </div>
      </div>
      <div class="group-label">墙面<i class="caret"></i></div>
    </div>
    <div class="group g-smart">
      <div class="group-body">
        <div class="col">
          <button class="cmd"><svg><use href="#i-bycad"/></svg>按CAD生成</button>
          <button class="cmd"><svg><use href="#i-floor"/></svg>按地面生成</button>
          <button class="cmd"><svg><use href="#i-edge"/></svg>按图元边线布置垂直图元</button>
        </div>
      </div>
      <div class="group-label">智能布置(W)<i class="caret"></i></div>
    </div>
    <div class="group g-cad">
      <div class="group-body">
        <div class="col">
          <button class="cmd"><svg><use href="#i-erase"/></svg>C删除</button>
          <button class="cmd"><svg><use href="#i-patch"/></svg>补画CAD线</button>
          <button class="cmd" disabled><svg><use href="#i-line"/></svg>直线<i class="caret pale"></i></button>
        </div>
      </div>
      <div class="group-label">CAD编辑<i class="caret"></i></div>
    </div>
    <div class="group g-layer">
      <div class="group-body"><button class="big"><svg></svg>图层管理<i class="caret"></i></button></div>
    </div>
  </section>

  <section class="options">
    <select aria-label="楼层"><option>首层</option></select>
    <select aria-label="类型"><option>(墙面)</option></select>
    <select aria-label="工程"><option>墙柱面工程</option></select>
    <select aria-label="构件类型"><option>墙面</option></select>
    <select aria-label="构件"><option>电视柜</option></select>
    <div class="tolerance"><label for="tol">误差值：</label><input id="tol" type="text" value="1"><span>mm</span></div>
    <span>↑↓←→键调整</span>
  </section>

  <main>
    <aside class="panel nav-panel">
      <div class="strip"><button aria-label="关闭">×</button></div>
      <h2>导航栏</h2>
      <div class="toolbar nav-tools">
        <svg><use href="#i-plus2"/></svg>
        <button class="toggle" aria-label="列表"><svg><use href="#i-list"/></svg></button>
        <button class="toggle" aria-label="窗口"><svg><use href="#i-window"/></svg></button>
      </div>
      <ul class="nav-tree">
        <li class="folder"><svg><use href="#i-folder"/></svg>房间</li>
        <li><a href="#"><svg><use href="#i-home"/></svg>房间(M)</a></li>
        <li class="folder"><svg><use href="#i-folder"/></svg>楼地面工程</li>
        <li><a href="#"><svg><use href="#i-floor"/></svg>楼地面</a></li>
        <li><a href="#"><svg><use href="#i-wave"/></svg>波打线(X)</a></li>
        <li><a href="#"><svg><use href="#i-stone"/></svg>过门石(D)</a></li>
        <li><a href="#"><svg><use href="#i-stairs"/></svg>楼梯(B)</a></li>
        <li><a href="#"><svg><use href="#i-dot"/></svg>点缀(O)</a></li>
        <li class="folder"><svg><use href="#i-folder"/></svg>天棚工程</li>
        <li><a href="#"><svg><use href="#i-ceiling"/></svg>天棚(C)</a></li>
        <li><a href="#"><svg><use href="#i-vent"/></svg>通风口(A)</a></li>
        <li><a href="#"><svg><use href="#i-bulb"/></svg>灯(L)</a></li>
        <li class="folder"><svg><use href="#i-folder"/></svg>墙柱面工程</li>
        <li><a href="#" class="selected"><svg><use href="#i-wall"/></svg>墙面(W)</a></li>
        <li><a href="#"><svg><use href="#i-skirting"/></svg>踢脚(S)</a></li>
        <li class="folder"><svg><use href="#i-folder-plus"/></svg>门窗工程</li>
        <li class="folder"><svg><use href="#i-folder"/></svg>零星装修</li>
        <li><a href="#"><svg><use href="#i-strip"/></svg>灯带(K)</a></li>
        <li><a href="#"><svg><use href="#i-meander"/></svg>装饰线条(Z)</a></li>
        <li><a href="#"><svg><use href="#i-steel"/></svg>钢构件(G)</a></li>
        <li><a href="#"><svg><use href="#i-rail"/></svg>栏杆(R)</a></li>
        <li><a href="#"><svg><use href="#i-partition"/></svg>隔墙(Q)</a></li>
        <li class="folder"><svg><use href="#i-folder-plus"/></svg>自定义</li>
        <li class="folder"><svg><use href="#i-folder-plus"/></svg>轴线</li>
      </ul>
    </aside>

    <div class="splitter"></div>

    <div class="side">
      <aside class="panel comp-panel">
        <div class="strip"><button aria-label="关闭">×</button></div>
        <h2>构件列表</h2>
        <div class="toolbar comp-tools">
          <button><svg><use href="#i-add"/></svg>新建<i class="caret"></i></button>
          <button><svg><use href="#i-copy"/></svg>复制</button>
          <button><svg><use href="#i-delete"/></svg>删除</button>
        </div>
        <div class="search"><input type="text" placeholder="搜索构件..." aria-label="搜索构件"><svg><use href="#i-search"/></svg></div>
        <ul class="comp-tree">
          <li class="parent">寒香雪02</li>
          <li><a href="#"><span class="swatch snow"></span>寒香雪02 [面层]</a></li>
          <li class="parent">寒香雪03</li>
          <li><a href="#"><span class="swatch snow"></span>寒香雪03 [面层]</a></li>
          <li class="parent">电视柜</li>
          <li><a href="#" class="selected"><span class="swatch slate"></span>木纹花格 [面层]</a></li>
          <li class="parent">电视机</li>
          <li><a href="#"><span class="swatch dark"></span>木纹花格 [面层]</a></li>
          <li class="parent">电视机屏幕</li>
          <li><a href="#"><span class="swatch screen"></span>电视屏幕 [面层]</a></li>
          <li class="parent">山水画</li>
          <li><a href="#"><span class="swatch ink"></span>山水画 [面层]</a></li>
          <li class="parent">竹子画</li>
          <li><a href="#"><span class="swatch bamboo"></span>竹子画 [面层]</a></li>
        </ul>
        <span class="thumb"></span>
      </aside>

      <aside class="panel prop-panel">
        <div class="strip"><button aria-label="关闭">×</button></div>
        <h2>属性</h2>
        <div class="prop-box">
          <table class="props">
            <colgroup><col class="c-num"><col class="c-name"><col class="c-value"><col class="c-extra"></colgroup>
            <thead><tr><th></th><th>属性名称</th><th>属性值</th><th>附加</th></tr></thead>
            <tbody>
              <tr><th>1</th><td class="blue">名称</td><td>木纹花格</td><td></td></tr>
              <tr><th>2</th><td class="blue">类别</td><td class="fixed">面层</td><td><input type="checkbox" aria-label="类别附加" checked></td></tr>
              <tr><th>3</th><td class="blue">厚度(mm)</td><td>2</td><td></td></tr>
              <tr><th>4</th><td>顶标高(m)</td><td class="fixed">层底标高(0)</td><td><input type="checkbox" aria-label="顶标高附加"></td></tr>
              <tr><th>5</th><td>底标高(m)</td><td class="fixed">层底标高(0)</td><td><input type="checkbox" aria-label="底标高附加"></td></tr>
              <tr><th>6</th><td>调整系数</td><td>1</td><td><input type="checkbox" aria-label="调整系数附加"></td></tr>
              <tr><th>7</th><td>备注</td><td></td><td><input type="checkbox" aria-label="备注附加"></td></tr>
              <tr><th>8</th><td><button class="expand" aria-label="展开">+</button>显示样式</td><td></td><td></td></tr>
            </tbody>
          </table>
        </div>
      </aside>
    </div>

    <div class="splitter"><span class="handle"></span></div>

    <section class="canvas">
      <svg class="drawing" viewBox="442 191 1197 838" preserveAspectRatio="xMinYMin slice">
        <defs>
          <filter id="grain" x="0" y="0" width="100%" height="100%" color-interpolation-filters="sRGB">
            <feTurbulence type="fractalNoise" baseFrequency="0.005 0.04" numOctaves="4" seed="8"/>
            <feColorMatrix values="0.11 0 0 0 0.472  0.1 0 0 0 0.307  0.09 0 0 0 0.207  0 0 0 0 1"/>
          </filter>
          <g id="drawer">
            <rect x="919" y="486" width="170" height="55" fill="none" stroke="#625d5c" stroke-width="4"/>
            <rect x="930" y="495" width="149" height="36" fill="none" stroke="#625d5c" stroke-width="4"/>
            <path d="M917 484h174v59H917zM922 489h164v49H922zM928 493h153v40H928zM933 498h143v30H933z" fill="none" stroke="#998050"/>
            <circle cx="1004" cy="514" r="5" fill="none" stroke="#3d7576" stroke-width="3"/>
          </g>
          <g id="reeds" fill="none" stroke="#52645f">
            <path d="M1143 384v260M1149 384v283M1164 424v243M1170 424v243M1185 390v250M1190 384v240M1206 440v227M1212 410v257M1227 384v256M1232 384v220M1248 430v214M1253 430v237M1269 384v237M1273 384v100M1289 416v251M1295 416v251"/>
            <path d="M1134 437h169M1150 444h120M1134 608h169M1134 615h169" stroke-dasharray="34 5"/>
          </g>
        </defs>

        <!-- wood face -->
        <rect x="879" y="191" width="760" height="505" filter="url(#grain)"/>
        <use href="#reeds" opacity=".5"/>
        <use href="#reeds" x="223" opacity=".5"/>
        <use href="#reeds" x="416" opacity=".35"/>
        <g fill="none" stroke="#a07c48">
          <path d="M879 191v505h760M894 191v489M895 247h420M895 258h420M895 451h218M895 462h217M895 564h217M895 575h217M879 696l16-16h420M1347 680h291"/>
          <path d="M1170 191v56M1180 191v56M1315 191v489M1330 191v505M1346 191v489M1346 247h125v-56M1346 258h136v-67M1595 191v67h43M1434 258v105M1444 258v105"/>
          <path d="M1067 362h248M1315 372H1058l-2-2v-10l6-4 5 6M1346 362h292M1346 372h292M1346 374h292"/>
          <path d="M1113 373v307M1123 373v307M1315 374h-192l11 10h169v283h-169V384M1303 384l12-11M1134 667l-11 12M1303 667l12 12 15 16 16-16 11-12h169V384h-169v283M1346 373l11 11M1526 384l11-11 2 0 12 11h87M1526 667l11 12h2l12-12V384M1551 667h87M1537 373v306M1539 373v306"/>
        </g>
        <use href="#drawer"/>
        <use href="#drawer" y="114"/>

        <!-- feet -->
        <g fill="none" stroke="#86764f">
          <path d="M1315 696v41h31v-41M1330 696v41M1263 696l3 8c1 20 26 10 33 15q8 3 16 12M1398 696l-3 8c-1 20-26 10-33 15q-8 3-16 12"/>
          <path d="M947 696l-2 8c-1 18-18 12-32 15q-10 3-18 14"/>
        </g>

        <!-- sheet frame -->
        <g fill="none">
          <path d="M529 191v713h1110" stroke="#777"/>
          <path d="M561 191v683h1078" stroke="#ddd"/>
          <path d="M603 191v676h41M603 518h41" stroke="#4aa3c7"/>
          <path d="M644 191v676h995" stroke="#fff" stroke-width="4"/>
        </g>

        <!-- dimensions -->
        <g fill="none" stroke="#0a9c1c">
          <path d="M787 191v550M827 191v550M782 737h13M822 247h13M822 258h13M822 565h13M822 575h13M822 679h13M822 695h13M822 737h13M784 740l6-6M824 740l6-6M824 250l6-6M824 261l6-6M824 568l6-6M824 578l6-6M824 682l6-6M824 698l6-6"/>
          <path d="M1253 247h12M1253 258h12M1253 362h12M1253 373h12M1253 679h12M1253 695h12M1508 258h12M1508 362h12M1256 250l6-6M1256 261l6-6M1256 365l6-6M1256 376l6-6M1511 261l6-6M1511 365l6-6"/>
          <path d="M1056 395v12M1113 395v12M1123 395v12M1315 395v12M1346 292v13M1434 292v13M1444 292v13M1481 292v13M1595 292v13M1053 404l6-6M1312 404l6-6M1343 302l6-6M1592 302l6-6"/>
          <path d="M1260 191v507M1515 191v175M1051 401h268M1341 299h298" stroke-width="2"/>
        </g>
        <g class="dims">
          <text transform="translate(823 256) rotate(-90)">20</text>
          <text transform="translate(823 192) rotate(-90)">20</text>
          <text transform="translate(823 415) rotate(-90)">590</text>
          <text transform="translate(823 573) rotate(-90)">20</text>
          <text transform="translate(823 632) rotate(-90)">200</text>
          <text transform="translate(823 690) rotate(-90)">30</text>
          <text transform="translate(823 719) rotate(-90)">80</text>
          <text transform="translate(1256 256) rotate(-90)">20</text>
          <text transform="translate(1256 314) rotate(-90)">200</text>
          <text transform="translate(1256 370) rotate(-90)">20</text>
          <text transform="translate(1256 529) rotate(-90)">590</text>
          <text transform="translate(1256 690) rotate(-90)">30</text>
          <text transform="translate(1511 314) rotate(-90)">200</text>
          <text x="1078" y="398">110</text>
          <text x="1216" y="398">367</text>
          <text x="1384" y="295">170</text>
          <text x="1436" y="295">20</text>
          <text x="1460" y="295">70</text>
          <text x="1535" y="295">220</text>
        </g>
        <g class="notes">
          <text transform="translate(555 847) rotate(-90)">|</text>
          <text transform="translate(555 835) rotate(-90)">未经本公司授权, 不得擅自复制本图纸或设计.</text>
          <text transform="translate(573 847) rotate(-90)">|</text>
          <text transform="translate(573 836) rotate(-90)">所有尺寸以标注为准, 请勿按比例测量图纸.</text>
          <text transform="translate(593 847) rotate(-90)">|</text>
          <text transform="translate(593 837) rotate(-90)">未经许可擅自变更已签章&lt;字&gt;图纸或设计,</text>
          <text transform="translate(593 658) rotate(-90)">原设计人不负责任何后果.</text>
          <text transform="translate(593 546) rotate(-90)">|</text>
          <text transform="translate(593 536) rotate(-90)">未签章&lt;字&gt;图纸不得用于施工.</text>
        </g>

        <!-- detail mark -->
        <g class="mark">
          <circle cx="1485" cy="831" r="23"/>
          <path d="M1462 831h173M1478 843h9"/>
          <text class="no" x="1477" y="829">3</text>
          <text x="1508" y="823">大样图</text>
          <text x="1508" y="848">Scale</text>
          <text x="1554" y="848">1:10</text>
        </g>

        <!-- axes -->
        <path d="M492 979v-20" stroke="#00b400" stroke-width="4"/><path d="M492 950l5 11h-10z" fill="#00b400"/>
        <path d="M492 979h20" stroke="#ff3a10" stroke-width="4"/><path d="M522 979l-12 5v-10z" fill="#ff3a10"/>
        <circle cx="492" cy="979" r="5" fill="#0a18d0"/>
        <text class="axis y" x="492" y="949">Y</text><text class="axis x" x="528" y="985">X</text>

        <!-- click halo and cursor -->
        <circle cx="885" cy="731" r="47" fill="#d9b600" fill-opacity=".94"/>
        <path d="M879 696v28M894 696v34" stroke="#e6c83a"/>
        <path d="M879 724h13v13h-13z" fill="#fff" stroke="#000"/>
        <path d="M884 726h3v3h3v3h-3v3h-3v-3h-3v-3h3z" fill="#fff" stroke="#000"/>
      </svg>
      <div class="tip">按鼠标左键指定插入点，按右键结束或ESC取消</div>
      <div class="view-tools">
        <button aria-label="动态观察"><svg><use href="#i-orbit"/></svg></button>
        <button class="b3d"><svg><use href="#i-cube3d"/></svg><span>3D</span></button>
        <button aria-label="俯视"><svg><use href="#i-cube-a"/></svg><i class="caret"></i></button>
        <button aria-label="前视"><svg><use href="#i-cube-b"/></svg><i class="caret"></i></button>
        <button aria-label="旋转"><svg><use href="#i-turn"/></svg><i class="caret"></i></button>
        <button aria-label="显示设置" class="last"><svg><use href="#i-checks"/></svg></button>
      </div>
    </section>

    <div class="splitter"><span class="handle"></span></div>

    <div class="right">
      <aside class="panel sheet-panel">
        <div class="strip"><button aria-label="关闭">×</button></div>
        <h2>图纸管理</h2>
        <div class="toolbar sheet-tools"><button>添加图纸</button><button>删除图纸</button><button>整理图纸<i class="caret"></i></button></div>
        <div class="sheet-search"><input type="text" placeholder="搜索图纸..." aria-label="搜索图纸"><button aria-label="搜索"><svg><use href="#i-search"/></svg></button></div>
        <div class="sheet-box">
          <div class="clip">
            <table class="sheets">
              <colgroup><col class="c-idx"><col class="c-title"><col class="c-code"><col class="c-scale"></colgroup>
              <thead><tr><th></th><th class="active">图纸名称</th><th>图号</th><th>比例</th></tr></thead>
              <tbody>
                <tr><th>4</th><td><span>目录(已导)</span></td><td>001</td><td>1:1</td></tr>
                <tr><th>5</th><td><span>节点图(一)(...</span></td><td>DL-01</td><td>1:1</td></tr>
                <tr><th>6</th><td><span>节点图(二)(...</span></td><td>DL-02</td><td>1:1</td></tr>
                <tr><th>7</th><td><span>节点图(三)(...</span></td><td>DL-03</td><td>1:1</td></tr>
                <tr><th>8</th><td><span>节点图(四)(...</span></td><td>DL-04</td><td>1:1</td></tr>
                <tr><th>9</th><td><span>节点图(五)(...</span></td><td>DL-05</td><td>1:1</td></tr>
                <tr><th>10</th><td><span>节点图(六)(...</span></td><td>DL-06</td><td>1:1</td></tr>
                <tr class="selected"><th>11</th><td><span>节点图(七)(...</span></td><td>DL-07</td><td>1:1</td></tr>
                <tr><th>12</th><td><span>节点图(八)(...</span></td><td>DL-08</td><td>1:1</td></tr>
                <tr><th>13</th><td><span>节点图(九)(...</span></td><td>DL-09</td><td>1:1</td></tr>
                <tr><th>14</th><td><span>节点图(十)(...</span></td><td>DL-10</td><td>1:1</td></tr>
                <tr><th>15</th><td><span>节点图(十一...</span></td><td>DL-11</td><td>1:1</td></tr>
                <tr><th>16</th><td><span>节点图(十二...</span></td><td>DL-12</td><td>1:1</td></tr>
                <tr><th>17</th><td><span>立面图1(已导)</span></td><td>EL-01</td><td>1:1</td></tr>
                <tr><th>18</th><td><span>立面图2(已导)</span></td><td>EL-02</td><td>1:1</td></tr>
                <tr><th>19</th><td><span>立面图3(已导)</span></td><td>EL-03</td><td>1:1</td></tr>
                <tr><th>20</th><td><span>立面图4(已导)</span></td><td>EL-04</td><td>1:1</td></tr>
                <tr><th>21</th><td><span>立面图5(已导)</span></td><td>EL-05</td><td>1:1</td></tr>
              </tbody>
            </table>
          </div>
          <span class="thumb v"></span>
          <span class="thumb h"></span>
        </div>
        <label class="only-split"><input type="checkbox">只显示拆分图纸</label>
      </aside>

      <aside class="panel layer-panel">
        <div class="strip"><button aria-label="关闭">×</button></div>
        <nav class="subtabs"><a href="#">显示设置</a><a href="#" class="active">图层管理</a><a href="#">立面图纸管理</a></nav>
        <div class="layer-box">
          <table class="layers">
            <colgroup><col class="c-on"><col class="c-color"><col class="c-layer"></colgroup>
            <thead><tr><th>开/关</th><th>颜色</th><th>名称</th></tr></thead>
            <tbody><tr><td><input type="checkbox" aria-label="CAD原始图层" checked></td><td><i class="play"></i></td><td>CAD原始图层</td></tr></tbody>
          </table>
          <span class="thumb"></span>
        </div>
      </aside>
    </div>
  </main>

  <footer class="status">
    <div class="readout">
      <span class="coords">X = 329160 Y = 77883</span>
      <span class="level">层高：2.8</span>
      <span class="base">底标高：0</span>
      <span class="count">0</span>
      <span>隐藏：0</span>
    </div>
    <div class="joined"><button class="text">选择子图元</button><button aria-label="正交"><svg><use href="#i-ortho"/></svg></button></div>
    <button class="on" aria-label="捕捉"><svg><use href="#i-snap"/></svg><i class="caret"></i></button>
    <button aria-label="三维捕捉"><svg><use href="#i-box"/></svg><i class="caret"></i></button>
    <button class="off" aria-label="交点"><svg><use href="#i-cross"/></svg></button>
    <button aria-label="极轴"><svg><use href="#i-track"/></svg><i class="caret"></i></button>
    <button class="on" aria-label="动态输入"><svg><use href="#i-dyn"/></svg><i class="caret"></i></button>
    <button class="text on">跨图层选择</button>
    <button class="text">折线选择</button>
    <select aria-label="工作平面"><option>无工作平面</option></select>
    <span>按鼠标左键指定插入点，按右键结束或ESC取消</span>
  </footer>
</body>
</html>
```
FILE: styles.css
```css
* {
  box-sizing: border-box;
}

body {
  margin: 0;
  padding: 20px 0;
  height: 100vh;
  display: flex;
  flex-direction: column;
  background: #000;
  color: #111;
  font: 12px/18px "Noto Sans", "Noto Sans CJK SC", sans-serif;
  overflow: hidden;
}

button, input, select {
  font: inherit;
  color: inherit;
  margin: 0;
  padding: 0;
  border: 0;
  background: none;
}

a {
  color: inherit;
  text-decoration: none;
}

ul {
  list-style: none;
  margin: 0;
  padding: 0;
}

svg {
  width: 16px;
  height: 16px;
  flex: none;
}

.sprite {
  display: none;
}

input[type="checkbox"] {
  appearance: none;
  width: 14px;
  height: 14px;
  flex: none;
  border: 1px solid #777;
  border-radius: 2px;
  background: #fff;
  position: relative;
}

input[type="checkbox"]:checked {
  background: #4a98f7;
  border-color: #4a98f7;
}

input[type="checkbox"]:checked::after {
  content: "";
  position: absolute;
  left: 4px;
  top: 1px;
  width: 4px;
  height: 8px;
  border: solid #fff;
  border-width: 0 2px 2px 0;
  transform: rotate(45deg);
}

select {
  appearance: none;
  background-color: #fff;
  background-image: linear-gradient(45deg, transparent 50%, #555 50%), linear-gradient(-45deg, transparent 50%, #555 50%);
  background-repeat: no-repeat;
  background-position: right 8px center, right 5px center;
  background-size: 3px 3px;
  border: 1px solid #a2a5ab;
  padding-left: 4px;
}

.caret {
  flex: none;
  border: 3px solid transparent;
  border-top: 4px solid #555;
  border-bottom: 0;
}

.caret.pale {
  border-top-color: #aaa;
}

.caret.barred::before {
  content: "";
  display: block;
  width: 6px;
  margin: -7px 0 0 -3px;
  border-top: 1px solid #555;
}

.thumb {
  position: absolute;
  background: #c6c6c6;
  border-radius: 4px;
}

/* title bar */
.titlebar {
  position: relative;
  display: flex;
  flex: 0 0 40px;
  background: #fff;
}

.app-logo {
  width: 46px;
  border-right: 1px solid #ccc;
  display: flex;
  align-items: center;
  padding: 4px 0 0 9px;
}

.app-logo span {
  width: 28px;
  height: 28px;
  border-radius: 5px;
  background: #fbe6de;
  color: #f4511e;
  font: italic 900 25px/28px Roboto, sans-serif;
  text-align: center;
}

.title-main {
  flex: 1 1 0;
}

.quick {
  display: flex;
  align-items: center;
  gap: 7px;
  height: 22px;
  padding-left: 8px;
}

.quick button {
  display: flex;
  align-items: center;
  gap: 4px;
}

.tabs {
  display: flex;
  height: 18px;
  padding-left: 4px;
}

.tabs a {
  padding: 0 13px;
  color: #333;
}

.tabs .active {
  background: #4c9bfd;
  color: #fff;
}

h1 {
  margin: 0 0 0 -46px;
  font-size: 12px;
  font-weight: 400;
  line-height: 22px;
  white-space: nowrap;
}

.title-right {
  flex: 1 1 0;
  display: flex;
  flex-direction: column;
  align-items: flex-end;
}

.win-btns {
  display: flex;
  gap: 20px;
  height: 22px;
  padding-right: 11px;
}

.user {
  display: flex;
  align-items: center;
  gap: 6px;
  height: 18px;
  padding-right: 6px;
}

.user-name {
  margin: 0 6px 0 -2px;
}

.avatar {
  width: 16px;
  height: 16px;
  background: radial-gradient(circle at 60% 45%, #d9cdb8 20%, #444 60%);
}

.help {
  display: flex;
  align-items: center;
}

.help svg {
  width: 12px;
}

/* brand mark over the top right corner */
.watermark {
  position: absolute;
  z-index: 5;
  right: 28px;
  top: 28px;
  display: flex;
  gap: 4px;
}

.wm-logo {
  width: 68px;
  height: 68px;
}

.wm-text {
  display: flex;
  flex-direction: column;
  padding-top: 6px;
  color: #000;
  white-space: nowrap;
}

.wm-text strong {
  font-size: 32px;
  font-weight: 900;
  line-height: 36px;
}

.wm-text em {
  font: 700 14px/18px "Noto Sans CJK SC", sans-serif;
}

/* ribbon */
.ribbon {
  flex: 0 0 100px;
  display: flex;
  padding: 3px 0 1px;
  background: linear-gradient(#fdfdfe, #f6f7f9 60%, #e9ebee);
  border-top: 1px solid #d5d7da;
  border-bottom: 2px solid #8f9299;
  white-space: nowrap;
}

.group {
  flex: none;
  display: flex;
  flex-direction: column;
  justify-content: space-between;
  border-right: 1px solid #c8cad0;
}

.g-define { width: 56px; }
.g-select { width: 132px; }
.g-common { width: 234px; }
.g-calc { width: 102px; }
.g-draw { width: 135px; }
.g-modify { width: 294px; }
.g-recog { width: 288px; }
.g-wall { width: 255px; }
.g-smart { width: 174px; }
.g-cad { width: 103px; }
.g-layer { width: 66px; }

.group-body {
  display: flex;
  gap: 10px;
  padding-left: 9px;
}

.g-define .group-body,
.g-select .group-body {
  padding-left: 12px;
}

.group-label {
  display: flex;
  align-items: center;
  justify-content: center;
  gap: 6px;
  line-height: 20px;
}

.cmd {
  display: flex;
  align-items: center;
  gap: 3px;
  height: 23px;
}

.cmd .caret {
  margin-left: 3px;
}

.cmd:disabled {
  color: #aaa;
}

.bigs {
  display: flex;
  gap: 3px;
  margin-left: -3px;
}

.big {
  display: flex;
  flex-direction: column;
  align-items: center;
  height: 67px;
  margin-top: 2px;
  padding: 1px;
}

.big svg {
  width: 30px;
  height: 30px;
  margin-bottom: 5px;
}

.big .caret {
  margin-top: 2px;
}

.big.on {
  background: #c3d5f3;
}

.g-draw .big svg {
  width: 26px;
}

/* options bar */
.options {
  flex: 0 0 31px;
  display: flex;
  align-items: center;
  gap: 13px;
  padding: 0 2px;
  background: #c9cdd4;
  border-bottom: 1px solid #8f9299;
}

.options select {
  width: 99px;
  height: 23px;
}

.tolerance {
  display: flex;
  align-items: center;
  gap: 1px;
  margin-right: 7px;
}

.tolerance input {
  width: 99px;
  height: 22px;
  padding-left: 4px;
  background: #fff;
  border: 1px solid #b5b8be;
}

/* docked panels */
main {
  flex: 1;
  min-height: 0;
  display: flex;
  background: #fff;
}

.splitter {
  flex: 0 0 4px;
  display: flex;
  align-items: center;
}

.handle {
  width: 4px;
  height: 98px;
  background: #5f6475;
}

.panel {
  position: relative;
  display: flex;
  flex-direction: column;
  background: #fff;
  border: 1px solid #c4c5c9;
  border-top: 0;
}

.strip {
  flex: 0 0 12px;
  display: flex;
  justify-content: flex-end;
  background: #d3d4d8;
}

.strip button {
  width: 17px;
  font-size: 14px;
  line-height: 12px;
  color: #666;
}

h2 {
  flex: none;
  margin: 0;
  padding-left: 8px;
  font-size: 12px;
  font-weight: 400;
  line-height: 21px;
  color: #777;
  background: #f0f0f1;
  border-top: 1px solid #c4c5c9;
  border-bottom: 1px solid #c4c5c9;
}

.toolbar {
  flex: 0 0 27px;
  display: flex;
  align-items: center;
  background: #f0f0f1;
}

.toolbar button {
  display: flex;
  align-items: center;
  gap: 4px;
}

.nav-panel {
  flex: 0 0 154px;
}

.nav-tools {
  gap: 4px;
  padding: 0 1px 0 5px;
  border-bottom: 1px solid #c4c5c9;
}

.nav-tools > svg {
  margin-right: auto;
}

.toolbar .toggle {
  width: 24px;
  height: 22px;
  justify-content: center;
  border: 1px solid #5fa8e6;
  border-radius: 3px;
  background: #e2f0fc;
}

.nav-tree {
  padding-top: 3px;
}

.nav-tree li {
  display: flex;
  align-items: center;
  height: 24px;
  padding-left: 40px;
}

.nav-tree .folder {
  gap: 4px;
  padding-left: 3px;
}

.nav-tree a {
  display: flex;
  align-items: center;
  gap: 6px;
  width: 92px;
  height: 21px;
  padding-left: 3px;
  white-space: nowrap;
}

.nav-tree .selected {
  background: #c7d7f2;
}

.side {
  flex: 0 0 279px;
  min-width: 0;
  display: flex;
  flex-direction: column;
  gap: 5px;
}

.comp-panel {
  flex: 0 0 432px;
}

.comp-tools {
  gap: 9px;
  padding-left: 4px;
}

.search {
  flex: 0 0 20px;
  display: flex;
  align-items: center;
  border: solid #c4c5c9;
  border-width: 1px 0;
  padding: 0 5px 0 1px;
}

.search input {
  flex: 1;
  min-width: 0;
}

.search svg {
  width: 14px;
  height: 12px;
}

input::placeholder {
  color: #777;
  opacity: 1;
}

.comp-tree {
  padding-top: 2px;
}

.comp-tree li {
  display: flex;
  align-items: center;
  height: 24px;
  padding-left: 72px;
}

.comp-tree .parent {
  gap: 9px;
  padding-left: 36px;
}

.comp-tree .parent::before {
  content: "";
  border: solid transparent;
  border-width: 0 0 6px 6px;
  border-bottom-color: #333;
}

.comp-tree a {
  display: flex;
  align-items: center;
  gap: 6px;
  width: 125px;
  height: 21px;
  padding-left: 3px;
}

.comp-tree .selected {
  background: #b1caec;
}

.swatch {
  width: 16px;
  height: 16px;
}

.snow { background: linear-gradient(160deg, #f4f4f4 40%, #ddd 60%, #f0f0f0); }
.slate { background: #4e5470; }
.dark { background: #444; }
.screen { background: linear-gradient(160deg, #1f55c9 40%, #7da0b8 50%, #8a8a3c 60%, #2b4a6a); }
.ink { background: linear-gradient(120deg, #333 20%, #aaa 40%, #555 55%, #888 80%, #333); }
.bamboo { background: repeating-linear-gradient(100deg, #e6e6e6 0 3px, #c2c2c2 3px 4px); }

.comp-panel .thumb {
  right: 3px;
  bottom: 14px;
  width: 8px;
  height: 84px;
}

.prop-panel {
  flex: 1;
  min-height: 0;
  background: #f0f0f1;
}

.prop-box {
  flex: 1;
  margin: 0 1px 1px;
  border: 1px solid #b9babe;
  background: linear-gradient(90deg, #ececed 21px, #fff 21px);
}

table {
  table-layout: fixed;
  border-collapse: collapse;
}

th {
  font-weight: 400;
  color: #333;
  background: #f0f0f1;
}

th, td {
  height: 21px;
  padding: 0;
  line-height: 18px;
  border-right: 1px solid #cfcfd2;
  border-bottom: 1px solid #cfcfd2;
  white-space: nowrap;
  overflow: hidden;
}

thead th {
  height: 20px;
}

td input[type="checkbox"] {
  display: block;
  margin: 0 auto;
}

.props {
  width: 272px;
  background: #fff;
}

.c-num { width: 21px; }
.c-name { width: 112px; }
.c-value { width: 98px; }
.c-extra { width: 41px; }

.props td {
  padding-left: 3px;
}

.props td:last-child {
  padding: 0;
}

.props .blue {
  color: #1d63c4;
}

.props .fixed {
  background: #ebebec;
  color: #999;
}

.expand {
  width: 13px;
  height: 13px;
  margin-right: 6px;
  border: 1px solid #666;
  border-radius: 2px;
  background: #fff;
  line-height: 10px;
}

/* drawing area */
.canvas {
  position: relative;
  flex: 1;
  min-width: 0;
  background: #000;
  overflow: hidden;
}

.drawing {
  display: block;
  width: 100%;
  height: 100%;
}

.drawing path,
.drawing rect {
  shape-rendering: crispEdges;
}

.dims text {
  fill: #fff;
  font: 15px "Noto Sans CJK SC", sans-serif;
  font-weight: 300;
  text-anchor: middle;
}

.notes text {
  fill: #ff4cf6;
  font: 700 9px "Noto Sans CJK SC", sans-serif;
}

.mark {
  fill: none;
  stroke: #d8d020;
}

.mark text {
  fill: #d8d020;
  stroke: none;
  font: 11px "Noto Sans CJK SC", sans-serif;
}

.mark .no {
  font-size: 16px;
}

.axis {
  font: 14px "Noto Sans CJK SC", sans-serif;
  text-anchor: middle;
}

.axis.y { fill: #00b400; }
.axis.x { fill: #ff3a10; }

.tip {
  position: absolute;
  left: 465px;
  top: 541px;
  padding: 0 6px;
  line-height: 19px;
  background: rgba(170, 170, 176, 0.88);
  color: #222;
  white-space: nowrap;
}

.view-tools {
  position: absolute;
  right: 0;
  top: 0;
  width: 33px;
  display: flex;
  flex-direction: column;
  align-items: center;
  gap: 5px;
  padding: 10px 0 11px;
  background: #9098a4;
  border: solid #dfe3e8;
  border-width: 0 0 1px 1px;
}

.view-tools svg {
  width: 24px;
  height: 24px;
}

.view-tools button {
  position: relative;
  display: flex;
  flex-direction: column;
  align-items: center;
  gap: 6px;
}

.b3d span {
  position: absolute;
  left: 5px;
  top: 9px;
  font-size: 10px;
  line-height: 14px;
}

.view-tools .last {
  padding-top: 5px;
  border-top: 1px solid #555d6b;
}

/* right dock */
.right {
  flex: 0 0 278px;
  min-width: 0;
  display: flex;
  flex-direction: column;
  gap: 4px;
}

.sheet-panel {
  flex: 0 0 529px;
  background: #f0f0f1;
}

.sheet-tools {
  gap: 8px;
  padding: 3px 0 0 5px;
}

.sheet-search {
  flex: 0 0 26px;
  display: flex;
  gap: 2px;
  padding-right: 1px;
}

.sheet-search input {
  flex: 1;
  min-width: 0;
  border: 1px solid #999;
  background: #fff;
  padding-left: 2px;
}

.sheet-search button {
  width: 80px;
  height: 24px;
  background: #fff;
  border: 1px solid #c4c5c9;
  border-radius: 3px;
}

.sheet-search button svg {
  transform: scaleX(-1);
  vertical-align: middle;
}

.sheet-box {
  position: relative;
  height: 419px;
  margin-top: 3px;
  border: solid #b9babe;
  border-width: 1px 0;
  background: #fff;
}

.clip {
  width: 260px;
  height: 403px;
  overflow: hidden;
}

.sheets {
  width: 306px;
}

.c-idx { width: 14px; }
.c-title { width: 121px; }
.c-code { width: 80px; }
.c-scale { width: 91px; }

.sheets tbody td {
  padding-left: 3px;
}

.sheets tbody td:nth-child(2) {
  padding-left: 19px;
  background: linear-gradient(90deg, transparent 8px, #ddd 8px 9px, transparent 9px 18px, #ddd 18px 19px, transparent 19px);
}

.sheets td span::before {
  content: "";
  display: inline-block;
  width: 15px;
  margin-right: 7px;
  border-top: 1px solid #ddd;
  vertical-align: middle;
}

.sheets .active {
  background: #73b2fd;
  color: #fff;
  font-weight: 700;
}

.sheets .selected td,
.sheets .selected td:nth-child(2) {
  background: #cfe4fd;
}

.sheets .selected th {
  background: #73b2fd;
  color: #fff;
  font-weight: 700;
}

.sheets .selected td:nth-child(2) {
  outline: 2px solid #7a7f86;
  outline-offset: -2px;
}

.sheets .selected span::before {
  border-color: transparent;
}

.thumb.v {
  right: 3px;
  top: 46px;
  width: 8px;
  height: 193px;
}

.thumb.h {
  left: 14px;
  bottom: 3px;
  width: 154px;
  height: 8px;
}

.only-split {
  display: flex;
  align-items: center;
  gap: 4px;
  padding-top: 1px;
}

.layer-panel {
  flex: 1;
  min-height: 0;
  background: #f0f0f1;
}

.subtabs {
  display: flex;
  border: solid #c4c5c9;
  border-width: 1px 0;
  line-height: 21px;
  color: #888;
}

.subtabs a {
  padding: 0 8px;
  background: #e2e2e4;
  border-right: 1px solid #c4c5c9;
}

.subtabs .active {
  background: #f5f5f6;
  color: #111;
}

.layer-box {
  position: relative;
  flex: 1;
  margin: 0 5px 0 4px;
  background: #fff;
  border: solid #b9babe;
  border-width: 0 1px;
  overflow: hidden;
}

.layers {
  width: 338px;
}

.c-on { width: 50px; }
.c-color { width: 36px; }
.c-layer { width: 252px; }

.layers td {
  height: 25px;
  text-align: center;
}

.layers td:last-child {
  padding-left: 3px;
  text-align: left;
}

.play {
  display: inline-block;
  border: solid transparent;
  border-width: 5px 0 5px 6px;
  border-left-color: #333;
  vertical-align: middle;
}

.layer-box .thumb {
  left: 14px;
  bottom: 3px;
  width: 79px;
  height: 8px;
}

/* status bar */
.status {
  flex: 0 0 31px;
  display: flex;
  align-items: center;
  gap: 3px;
  padding-left: 2px;
  background: #dedee0;
  color: #333;
  white-space: nowrap;
}

.readout {
  display: flex;
  width: 652px;
}

.coords { width: 263px; }
.level { width: 83px; }
.base { width: 103px; }
.count { width: 103px; }

.status button {
  display: flex;
  align-items: center;
  justify-content: center;
  gap: 4px;
  height: 25px;
  padding: 0 4px;
  background: #d0d0d2;
  border: 1px solid #a0a0a4;
}

.status button.text {
  padding: 0 5px;
}

.status button.on {
  background: #fff;
  border-color: #4a90c8;
}

.status button.off {
  opacity: 0.7;
}

.joined {
  display: flex;
}

.joined button + button {
  border-left: 0;
}

.status select {
  width: 99px;
  height: 25px;
}
```
